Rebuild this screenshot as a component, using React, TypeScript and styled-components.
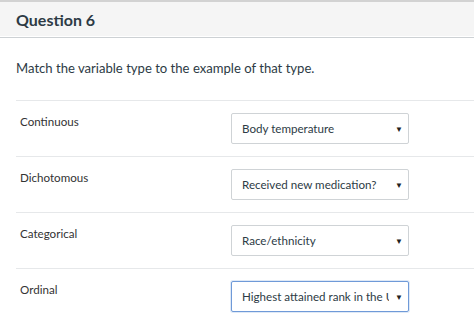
import styled, { createGlobalStyle } from 'styled-components'

const GlobalStyle = createGlobalStyle`
  body {
    margin: 0;
    background: #fff;
    font-family: Lato, 'Open Sans', sans-serif;
    color: #2d3b45;
  }
`

const Page = styled.div`
  width: 474px;
  border-top: 2px solid #d2d2d2;
`

const Header = styled.div`
  height: 34px;
  display: flex;
  align-items: center;
  padding: 0 16px;
  background: #f5f5f5;
  box-shadow: 0 1px 0 #fff, 0 2px 0 #cdd1d4;
  font-size: 16px;
  font-weight: 700;
  color: #2d3b45;
`

const Body = styled.div`
  padding: 20px 0 0 16px;
`

const Prompt = styled.p`
  margin: 0;
  height: 42px;
  padding-top: 2px;
  font-size: 13.1px;
  line-height: 20px;
  color: #2d3b45;
  border-bottom: 1px solid #e6e8ea;
`

const Row = styled.div`
  display: grid;
  grid-template-columns: 215px 178px;
  align-items: start;
  padding: 12px 0;
  border-bottom: 1px solid #e6e8ea;

  &:last-child {
    border-bottom: none;
  }
`

const Label = styled.div`
  padding: 1px 0 0 4px;
  font-size: 11.6px;
  line-height: 16px;
  color: #333;
`

const Select = styled.div<{ $focused?: boolean }>`
  height: 29px;
  display: flex;
  align-items: center;
  padding: 0 5px 0 10px;
  background: #fff;
  border: 1px solid ${(p) => (p.$focused ? '#6f9ad8' : '#cfd3d6')};
  border-radius: 2px;
  box-shadow: ${(p) => (p.$focused ? '0 0 0 1px rgba(111,154,216,0.22)' : 'none')};
  font-size: 11.6px;
  color: #2d3b45;
`

const Value = styled.span`
  flex: 1;
  overflow: hidden;
  white-space: nowrap;
  margin-right: 6px;
`

const Arrow = styled.span`
  font-size: 8px;
  color: #222;
`

const rows = [
  { label: 'Continuous', value: 'Body temperature' },
  { label: 'Dichotomous', value: 'Received new medication?' },
  { label: 'Categorical', value: 'Race/ethnicity' },
  { label: 'Ordinal', value: 'Highest attained rank in the US Army', focused: true },
]

export default function App() {
  return (
    <>
      <GlobalStyle />
      <Page>
        <Header>Question 6</Header>
        <Body>
          <Prompt>Match the variable type to the example of that type.</Prompt>
          {rows.map((r) => (
            <Row key={r.label}>
              <Label>{r.label}</Label>
              <Select $focused={r.focused}>
                <Value>{r.value}</Value>
                <Arrow>▼</Arrow>
              </Select>
            </Row>
          ))}
        </Body>
      </Page>
    </>
  )
}
